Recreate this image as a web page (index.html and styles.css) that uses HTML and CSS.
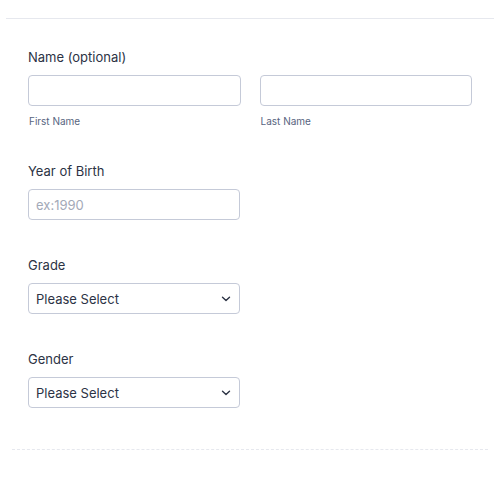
FILE: index.html
```html
<!DOCTYPE html>
<html lang="en">
<head>
  <meta charset="UTF-8" />
  <meta name="viewport" content="width=device-width, initial-scale=1.0"/>
  <title>Student Form</title>
  <link rel="stylesheet" href="styles.css">
</head>
<body>

  <div class="top-line"></div>

  <form class="form">
    <div class="field">
      <label class="label">Name (optional)</label>
      <div class="name-row">
        <div class="name-col">
          <input type="text" class="input" />
          <span class="sublabel">First Name</span>
        </div>
        <div class="name-col">
          <input type="text" class="input" />
          <span class="sublabel">Last Name</span>
        </div>
      </div>
    </div>

    <div class="field">
      <label class="label">Year of Birth</label>
      <input type="text" class="input short" placeholder="ex:1990" />
    </div>

    <div class="field">
      <label class="label">Grade</label>
      <div class="select-wrap">
        <select class="select">
          <option>Please Select</option>
        </select>
        <svg class="chevron" width="10" height="6" viewBox="0 0 10 6">
          <path d="M1.5 1.2l3.5 3.3 3.5-3.3" fill="none" stroke="#2c3345" stroke-width="1.4" stroke-linecap="round" stroke-linejoin="round"/>
        </svg>
      </div>
    </div>

    <div class="field">
      <label class="label">Gender</label>
      <div class="select-wrap">
        <select class="select">
          <option>Please Select</option>
        </select>
        <svg class="chevron" width="10" height="6" viewBox="0 0 10 6">
          <path d="M1.5 1.2l3.5 3.3 3.5-3.3" fill="none" stroke="#2c3345" stroke-width="1.4" stroke-linecap="round" stroke-linejoin="round"/>
        </svg>
      </div>
    </div>
  </form>

  <div class="bottom-line"></div>

</body>
</html>
```

FILE: styles.css
```css
* {
  box-sizing: border-box;
}

body {
  font-family: Inter, 'Noto Sans', sans-serif;
  background: #fff;
  color: #2c3345;
  margin: 0;
  padding: 0;
}

.top-line {
  height: 19px;
  margin: 0 6px;
  border-bottom: 1px solid #e6e8ee;
}

.form {
  padding: 30px 28px 0;
  display: flex;
  flex-direction: column;
  gap: 37px;
}

.field {
  display: flex;
  flex-direction: column;
}

.label {
  font-size: 13px;
  line-height: 16px;
  font-weight: 400;
  color: #2c3345;
  margin-bottom: 10px;
}

.name-row {
  display: flex;
  gap: 19px;
  width: 444px;
}

.name-col {
  flex: 1;
  min-width: 0;
  display: flex;
  flex-direction: column;
}

.name-col .input {
  width: 100%;
}

.input,
.select {
  height: 31px;
  border: 1px solid #c5cad8;
  border-radius: 4px;
  background: #fff;
  font-family: inherit;
  font-size: 13px;
  color: #2c3345;
  padding: 0 7px;
  outline: none;
}

.input::placeholder {
  color: #a3a9b8;
}

.short {
  width: 212px;
}

.sublabel {
  font-size: 10px;
  line-height: 12px;
  color: #57647e;
  margin-top: 9px;
  margin-bottom: -1px;
  padding-left: 1px;
}

.select-wrap {
  position: relative;
  width: 212px;
}

.select {
  width: 100%;
  appearance: none;
  -webkit-appearance: none;
}

.chevron {
  position: absolute;
  right: 9px;
  top: 13px;
}

.bottom-line {
  margin: 41px 12px 0;
  border-top: 1px dashed #e6e8ee;
}
```
